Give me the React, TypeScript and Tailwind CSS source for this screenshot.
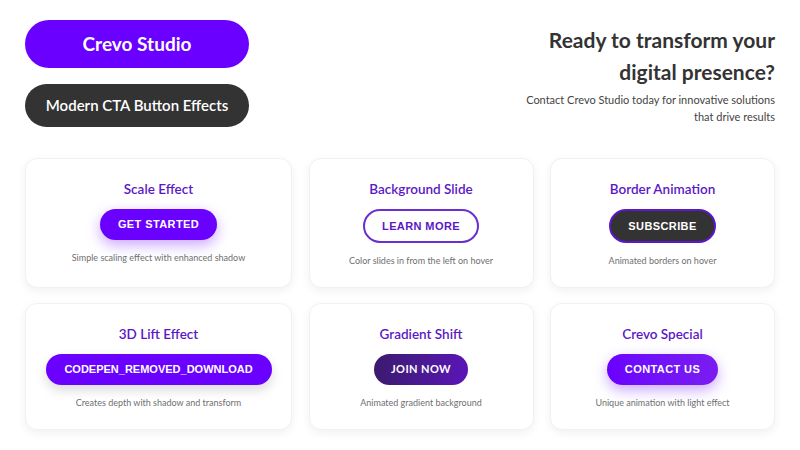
import React from "react";

const sans = "font-['Lato','Noto_Sans',sans-serif]";
const arial = "font-['Liberation_Sans',Arial,sans-serif]";

function Card({ title, desc, children }: { title: string; desc: string; children: React.ReactNode }) {
  return (
    <div className="flex flex-col items-center rounded-[12px] border border-[#f1f1f1] bg-white pb-[20px] pt-[19px] shadow-[0_3px_10px_rgba(0,0,0,0.06)]">
      <h3 className={`${sans} text-[13.5px] font-semibold leading-[22px] text-[#5b17c7]`}>{title}</h3>
      <div className="mt-[9px]">{children}</div>
      <p className={`${sans} mt-[12px] text-[9px] leading-[12px] text-[#6f6f6f]`}>{desc}</p>
    </div>
  );
}

export default function App() {
  return (
    <div className="h-[450px] w-[800px] bg-white px-[25px] pt-[20px]">
      <div className="flex justify-between">
        <div className="flex w-[224px] flex-col gap-[16px]">
          <div className={`${sans} flex h-[48px] items-center justify-center rounded-full bg-[#6a00ff] text-[19px] font-bold text-white`}>
            Crevo Studio
          </div>
          <div className={`${sans} flex h-[43px] items-center justify-center rounded-full bg-[#333333] text-[15px] font-semibold text-white`}>
            Modern CTA Button Effects
          </div>
        </div>
        <div className="pt-[4px] text-right">
          <h2 className={`${sans} text-[21px] font-bold leading-[32px] text-[#333333]`}>
            Ready to transform your
            <br />
            digital presence?
          </h2>
          <p className={`${sans} mt-[3px] text-[11px] leading-[17px] text-[#444444]`}>
            Contact Crevo Studio today for innovative solutions
            <br />
            that drive results
          </p>
        </div>
      </div>

      <div className="mt-[31px] grid grid-cols-[267px_225px_225px] justify-between gap-y-[15px]">
        <Card title="Scale Effect" desc="Simple scaling effect with enhanced shadow">
          <button className={`${arial} h-[31px] w-[117px] rounded-full bg-[#6a00ff] text-[11px] font-bold tracking-[0.4px] text-white shadow-[0_5px_14px_rgba(106,0,255,0.35)]`}>
            GET STARTED
          </button>
        </Card>
        <Card title="Background Slide" desc="Color slides in from the left on hover">
          <button className={`${arial} h-[34px] w-[116px] rounded-full border-2 border-[#6a2fd0] bg-white text-[11px] font-bold tracking-[0.4px] text-[#5b17c7]`}>
            LEARN MORE
          </button>
        </Card>
        <Card title="Border Animation" desc="Animated borders on hover">
          <button className={`${arial} h-[34px] w-[107px] rounded-full border-2 border-[#5a18c8] bg-[#333333] text-[11px] font-bold tracking-[0.4px] text-white`}>
            SUBSCRIBE
          </button>
        </Card>
        <Card title="3D Lift Effect" desc="Creates depth with shadow and transform">
          <button className={`${arial} h-[31px] w-[226px] rounded-full bg-[#6a00ff] text-[11px] font-bold tracking-[0px] text-white shadow-[0_5px_12px_rgba(0,0,0,0.15)]`}>
            CODEPEN_REMOVED_DOWNLOAD
          </button>
        </Card>
        <Card title="Gradient Shift" desc="Animated gradient background">
          <button className={`${sans} h-[31px] w-[94px] rounded-full bg-gradient-to-r from-[#3b1a6e] to-[#5a14b8] text-[11px] font-bold tracking-[0.4px] text-white`}>
            JOIN NOW
          </button>
        </Card>
        <Card title="Crevo Special" desc="Unique animation with light effect">
          <button className={`${arial} h-[31px] w-[111px] rounded-full bg-gradient-to-r from-[#6a00ff] to-[#7a1cf0] text-[11px] font-bold tracking-[0.4px] text-white shadow-[0_5px_14px_rgba(106,0,255,0.35)]`}>
            CONTACT US
          </button>
        </Card>
      </div>
    </div>
  );
}
